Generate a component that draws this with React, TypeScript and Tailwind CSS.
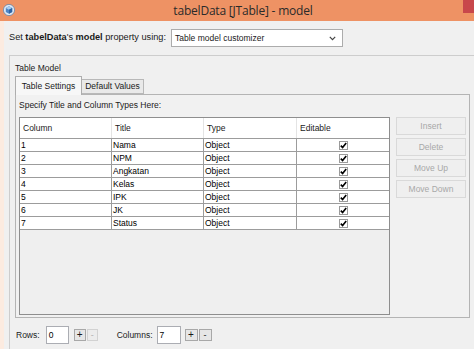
import React from "react";

const rows = [
  ["1", "Nama"],
  ["2", "NPM"],
  ["3", "Angkatan"],
  ["4", "Kelas"],
  ["5", "IPK"],
  ["6", "JK"],
  ["7", "Status"],
];

function Check() {
  return (
    <div className="w-[9px] h-[9px] border border-[#9a9a9a] bg-white flex items-center justify-center">
      <svg width="7" height="7" viewBox="0 0 7 7">
        <path d="M0.8 3.6 L2.6 5.6 L6.2 1" stroke="#000" strokeWidth="1.6" fill="none" />
      </svg>
    </div>
  );
}

function SideButton({ label }: { label: string }) {
  return (
    <div className="w-[70px] h-[18px] border border-[#d9d9d9] bg-[#efefef] flex items-center justify-center text-[#a8a8a8] text-[8.5px]">
      {label}
    </div>
  );
}

export default function App() {
  return (
    <div
      className="w-[474px] h-[349px] overflow-hidden bg-[#f0f0f0] flex flex-col text-[8.5px] text-[#1a1a1a]"
      style={{ fontFamily: '"Liberation Sans", Arial, sans-serif' }}
    >
      {/* Title bar */}
      <div className="h-[21px] bg-[#ee9264] flex items-center relative shrink-0">
        <div className="absolute left-[3px] top-[4px]">
          <svg width="12" height="12" viewBox="0 0 12 12">
            <circle cx="6" cy="6" r="5.6" fill="#dfe8f3" stroke="#6b86a8" strokeWidth="0.8" />
            <path d="M6 2.2 L9.2 4 L9.2 8 L6 9.8 L2.8 8 L2.8 4 Z" fill="#4d86c8" />
            <path d="M6 2.2 L9.2 4 L6 5.8 L2.8 4 Z" fill="#a9cdf0" />
            <path d="M6 5.8 L9.2 4 L9.2 8 L6 9.8 Z" fill="#2e63a3" />
          </svg>
        </div>
        <div
          className="flex-1 text-center text-[12px] text-[#2a2a2a] leading-[21px] tracking-[-0.2px] pl-[12px]"
          style={{ fontFamily: '"Open Sans", "Noto Sans", sans-serif' }}
        >
          tabelData [JTable] - model
        </div>
        <div className="absolute right-0 top-0 w-[11px] h-[13px] bg-[#c8474b]" />
      </div>

      {/* Body */}
      <div className="flex-1 flex border-l-[4px] border-[#fcebe0]">
        <div className="flex-1 flex flex-col">
          {/* combobox row */}
          <div className="mt-[8px] ml-[5px] h-[18px] flex items-center">
            <span className="shrink-0 text-[9.2px]">
              Set <b>tabelData</b>'s <b>model</b> property using:
            </span>
            <div className="ml-[5px] shrink-0 w-[172px] h-[18px] bg-white border border-[#acacac] flex items-center justify-between pl-[3px] pr-[6px]">
              <span>Table model customizer</span>
              <svg width="7" height="5" viewBox="0 0 7 5">
                <path d="M0.8 0.8 L3.5 3.6 L6.2 0.8" stroke="#444" strokeWidth="1.2" fill="none" />
              </svg>
            </div>
          </div>

          {/* group box */}
          <div className="mt-[8px] ml-[5px] flex-1 border-t border-l border-[#cdcdcd] flex flex-col pl-[5px]">
            <div className="pt-[6px] h-[20px] leading-[13px]">Table Model</div>
            {/* tabs */}
            <div className="flex items-end h-[18px] relative z-10">
              <div className="h-[19px] -mb-px w-[67px] bg-[#f7f7f7] border border-b-0 border-[#adadad] flex items-center justify-center leading-[14px]">
                Table Settings
              </div>
              <div className="h-[15px] w-[62px] bg-[#e9e9e9] border border-l-0 border-[#b8b8b8] flex items-center justify-center">
                Default Values
              </div>
            </div>
            {/* tab panel */}
            <div className="w-[455px] h-[224px] border border-[#b4b4b4] bg-[#f1f1f1] flex flex-col pl-[3px]">
              <div className="pt-[5px] h-[22px] leading-[11px]">Specify Title and Column Types Here:</div>
              <div className="flex">
                {/* table */}
                <div className="w-[371px] h-[198px] border border-[#8e8e8e] bg-[#efefef] flex flex-col">
                  <div className="h-[20px] bg-white grid grid-cols-[92px_92px_93px_92px] items-center">
                    <div className="pl-[3px] h-full flex items-center border-r border-[#e4e4e4]">Column</div>
                    <div className="pl-[3px] h-full flex items-center border-r border-[#e4e4e4]">Title</div>
                    <div className="pl-[3px] h-full flex items-center border-r border-[#e4e4e4]">Type</div>
                    <div className="pl-[3px] h-full flex items-center">Editable</div>
                  </div>
                  {rows.map(([n, t]) => (
                    <div
                      key={n}
                      className="h-[13px] bg-white grid grid-cols-[92px_92px_93px_92px] border-t border-[#9c9c9c] text-black"
                    >
                      <div className="pl-[1px] border-r border-[#9c9c9c] leading-[12px]">{n}</div>
                      <div className="pl-[1px] border-r border-[#9c9c9c] leading-[12px]">{t}</div>
                      <div className="pl-[1px] border-r border-[#9c9c9c] leading-[12px]">Object</div>
                      <div className="flex items-center justify-center">
                        <Check />
                      </div>
                    </div>
                  ))}
                  <div className="border-t border-[#9c9c9c]" />
                </div>
                {/* buttons */}
                <div className="ml-[6px] flex flex-col gap-[3px]">
                  <SideButton label="Insert" />
                  <SideButton label="Delete" />
                  <SideButton label="Move Up" />
                  <SideButton label="Move Down" />
                </div>
              </div>
            </div>

            {/* bottom controls */}
            <div className="mt-[8px] h-[18px] flex items-center pl-[1px]">
              <span>Rows:</span>
              <div className="ml-[6px] w-[23px] h-[18px] bg-white border border-[#abadb3] pl-[2px] leading-[16px] text-black">0</div>
              <div className="ml-[5px] w-[12px] h-[12px] bg-[#e6e6e6] border border-[#a8a8a8] flex items-center justify-center text-[10px] leading-none">+</div>
              <div className="ml-[1px] w-[11px] h-[12px] bg-[#ececec] border border-[#d2d2d2] flex items-center justify-center text-[9px] leading-none text-[#b0b0b0]">-</div>
              <span className="ml-[19px]">Columns:</span>
              <div className="ml-[4px] w-[24px] h-[18px] bg-white border border-[#abadb3] pl-[2px] leading-[16px] text-black">7</div>
              <div className="ml-[4px] w-[13px] h-[12px] bg-[#e6e6e6] border border-[#a8a8a8] flex items-center justify-center text-[10px] leading-none">+</div>
              <div className="ml-[1px] w-[13px] h-[12px] bg-[#e6e6e6] border border-[#a8a8a8] flex items-center justify-center text-[9px] leading-none">-</div>
            </div>
          </div>
        </div>
      </div>
    </div>
  );
}
